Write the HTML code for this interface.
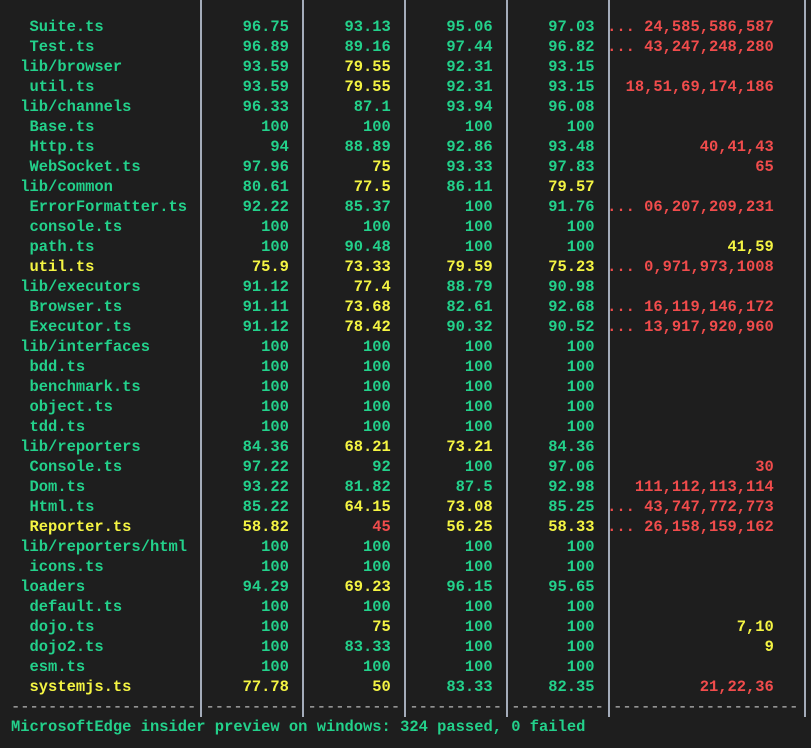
<!DOCTYPE html>
<html><head><meta charset="utf-8"><style>
html,body{margin:0;padding:0;background:#1e1e1e;width:811px;height:748px;overflow:hidden}
body{position:relative;font-family:"Liberation Mono",monospace;font-size:15.45px;font-weight:bold;color:#23d18b}
#t{position:absolute;left:11px;top:17px}
.r{height:20px;line-height:20px;white-space:pre;display:flex}
.r b{display:inline-block;width:20ch;font-weight:bold}
.r i{display:inline-block;width:11ch;text-align:right;padding-right:1ch;box-sizing:border-box;font-style:normal}
.r u{display:inline-block;width:196px;text-align:right;padding-right:26px;box-sizing:border-box;text-decoration:none}
.g{color:#23d18b}.y{color:#f5f543}.e{color:#f14c4c}
.p{position:absolute;top:0;height:717px;width:2px;background:#a4acba}
.d{color:#b8b8b8;font-weight:normal}
</style></head><body>
<div class="p" style="left:200px"></div>
<div class="p" style="left:302px"></div>
<div class="p" style="left:404px"></div>
<div class="p" style="left:506px"></div>
<div class="p" style="left:608px"></div>
<div class="p" style="left:804px"></div>
<div id="t">
<div class="r"><b>  Suite.ts</b><i>96.75</i><i>93.13</i><i>95.06</i><i>97.03</i><u class="e">... 24,585,586,587</u></div>
<div class="r"><b>  Test.ts</b><i>96.89</i><i>89.16</i><i>97.44</i><i>96.82</i><u class="e">... 43,247,248,280</u></div>
<div class="r"><b> lib/browser</b><i>93.59</i><i class="y">79.55</i><i>92.31</i><i>93.15</i><u></u></div>
<div class="r"><b>  util.ts</b><i>93.59</i><i class="y">79.55</i><i>92.31</i><i>93.15</i><u class="e">18,51,69,174,186</u></div>
<div class="r"><b> lib/channels</b><i>96.33</i><i>87.1</i><i>93.94</i><i>96.08</i><u></u></div>
<div class="r"><b>  Base.ts</b><i>100</i><i>100</i><i>100</i><i>100</i><u></u></div>
<div class="r"><b>  Http.ts</b><i>94</i><i>88.89</i><i>92.86</i><i>93.48</i><u class="e">40,41,43</u></div>
<div class="r"><b>  WebSocket.ts</b><i>97.96</i><i class="y">75</i><i>93.33</i><i>97.83</i><u class="e">65</u></div>
<div class="r"><b> lib/common</b><i>80.61</i><i class="y">77.5</i><i>86.11</i><i class="y">79.57</i><u></u></div>
<div class="r"><b>  ErrorFormatter.ts</b><i>92.22</i><i>85.37</i><i>100</i><i>91.76</i><u class="e">... 06,207,209,231</u></div>
<div class="r"><b>  console.ts</b><i>100</i><i>100</i><i>100</i><i>100</i><u></u></div>
<div class="r"><b>  path.ts</b><i>100</i><i>90.48</i><i>100</i><i>100</i><u class="y">41,59</u></div>
<div class="r y"><b>  util.ts</b><i>75.9</i><i>73.33</i><i>79.59</i><i>75.23</i><u class="e">... 0,971,973,1008</u></div>
<div class="r"><b> lib/executors</b><i>91.12</i><i class="y">77.4</i><i>88.79</i><i>90.98</i><u></u></div>
<div class="r"><b>  Browser.ts</b><i>91.11</i><i class="y">73.68</i><i>82.61</i><i>92.68</i><u class="e">... 16,119,146,172</u></div>
<div class="r"><b>  Executor.ts</b><i>91.12</i><i class="y">78.42</i><i>90.32</i><i>90.52</i><u class="e">... 13,917,920,960</u></div>
<div class="r"><b> lib/interfaces</b><i>100</i><i>100</i><i>100</i><i>100</i><u></u></div>
<div class="r"><b>  bdd.ts</b><i>100</i><i>100</i><i>100</i><i>100</i><u></u></div>
<div class="r"><b>  benchmark.ts</b><i>100</i><i>100</i><i>100</i><i>100</i><u></u></div>
<div class="r"><b>  object.ts</b><i>100</i><i>100</i><i>100</i><i>100</i><u></u></div>
<div class="r"><b>  tdd.ts</b><i>100</i><i>100</i><i>100</i><i>100</i><u></u></div>
<div class="r"><b> lib/reporters</b><i>84.36</i><i class="y">68.21</i><i class="y">73.21</i><i>84.36</i><u></u></div>
<div class="r"><b>  Console.ts</b><i>97.22</i><i>92</i><i>100</i><i>97.06</i><u class="e">30</u></div>
<div class="r"><b>  Dom.ts</b><i>93.22</i><i>81.82</i><i>87.5</i><i>92.98</i><u class="e">111,112,113,114</u></div>
<div class="r"><b>  Html.ts</b><i>85.22</i><i class="y">64.15</i><i class="y">73.08</i><i>85.25</i><u class="e">... 43,747,772,773</u></div>
<div class="r y"><b>  Reporter.ts</b><i>58.82</i><i class="e">45</i><i>56.25</i><i>58.33</i><u class="e">... 26,158,159,162</u></div>
<div class="r"><b> lib/reporters/html</b><i>100</i><i>100</i><i>100</i><i>100</i><u></u></div>
<div class="r"><b>  icons.ts</b><i>100</i><i>100</i><i>100</i><i>100</i><u></u></div>
<div class="r"><b> loaders</b><i>94.29</i><i class="y">69.23</i><i>96.15</i><i>95.65</i><u></u></div>
<div class="r"><b>  default.ts</b><i>100</i><i>100</i><i>100</i><i>100</i><u></u></div>
<div class="r"><b>  dojo.ts</b><i>100</i><i class="y">75</i><i>100</i><i>100</i><u class="y">7,10</u></div>
<div class="r"><b>  dojo2.ts</b><i>100</i><i>83.33</i><i>100</i><i>100</i><u class="y">9</u></div>
<div class="r"><b>  esm.ts</b><i>100</i><i>100</i><i>100</i><i>100</i><u></u></div>
<div class="r y"><b>  systemjs.ts</b><i>77.78</i><i>50</i><i class="g">83.33</i><i class="g">82.35</i><u class="e">21,22,36</u></div>
<div class="r d">-------------------- ---------- ---------- ---------- ---------- --------------------</div>
<div class="r">MicrosoftEdge insider preview on windows: 324 passed, 0 failed</div>
</div>
</body></html>
